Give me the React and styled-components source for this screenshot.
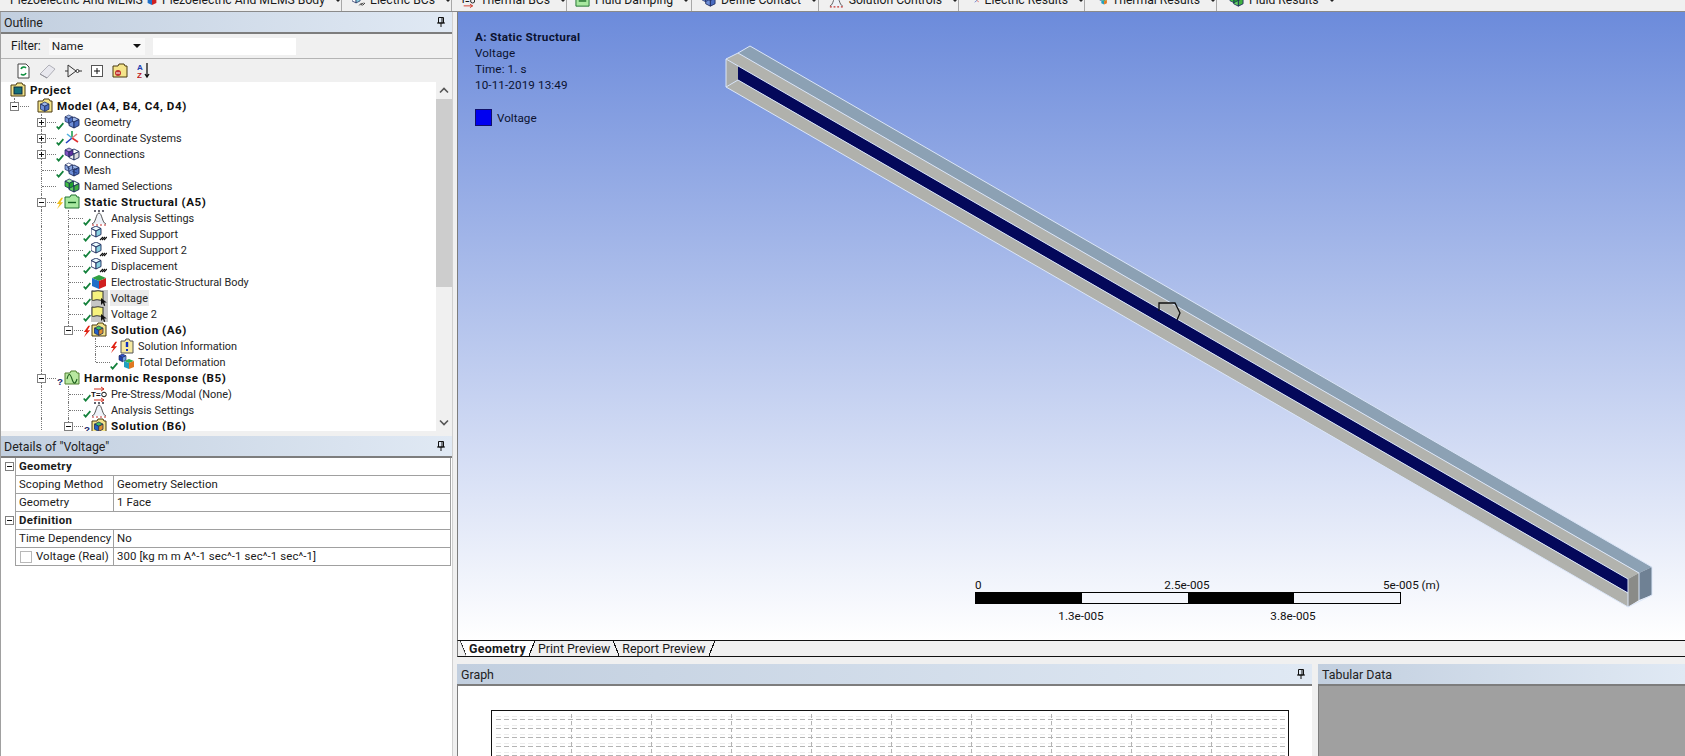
import React from "react";
import styled, { createGlobalStyle } from "styled-components";

const GlobalStyle = createGlobalStyle`
html, body { margin: 0; padding: 0; background: #f0f0f0; }
body { font-family: Roboto, "Noto Sans", sans-serif; font-size: 11.5px; color: #1a1a1a; }
* { box-sizing: border-box; }
`;

const Page = styled.div`
  width: 1685px;
  height: 756px;
  overflow: hidden;
  display: flex;
  flex-direction: column;
  background: #f0f0f0;
`;

/* top toolbar, cut off by the window */
const TopBar = styled.div`
  height: 12px;
  flex: none;
  display: flex;
  overflow: hidden;
  padding-left: 9px;
  background: #f0f0f0;
  border-bottom: 1px solid #8a8a8a;
`;
const TopItem = styled.div`
  flex: none;
  width: ${(p) => p.$w}px;
  height: 22px;
  margin-top: -11px;
  display: flex;
  align-items: center;
  gap: 5px;
  padding-left: ${(p) => p.$pad}px;
  font-size: 12.2px;
  white-space: nowrap;
  border-right: ${(p) => (p.$sep ? "1px solid #a8a8a8" : "none")};
`;
const TinyArrow = styled.span`
  width: 0;
  height: 0;
  margin-left: 5px;
  border-left: 3px solid transparent;
  border-right: 3px solid transparent;
  border-top: 3px solid #222;
`;

const Main = styled.div`
  flex: 1;
  display: flex;
  min-height: 0;
`;
const LeftColumn = styled.div`
  width: 453px;
  flex: none;
  display: flex;
  flex-direction: column;
  background: #fff;
  border-left: 1px solid #a0a0a0;
  border-right: 1px solid #d0d0d0;
`;
const RightColumn = styled.div`
  flex: 1;
  margin-left: 4px;
  display: flex;
  flex-direction: column;
  min-width: 0;
`;

const PanelHead = styled.div`
  height: 22px;
  flex: none;
  display: flex;
  align-items: center;
  justify-content: space-between;
  padding: 0 7px 0 ${(p) => p.$inset || 3}px;
  font-size: 12.4px;
  color: #222;
  background: linear-gradient(90deg, #c2cfdf, #e0e9f4);
  border-bottom: 2px solid #7d7d7d;
`;

const FilterRow = styled.div`
  height: 25px;
  flex: none;
  display: flex;
  align-items: center;
  padding-left: 10px;
  background: #f0f0f0;
  border-bottom: 1px solid #b4b4b4;
  font-size: 12px;
`;
const FilterCombo = styled.div`
  width: 96px;
  height: 17px;
  margin-left: 8px;
  padding-left: 3px;
  display: flex;
  align-items: center;
  justify-content: space-between;
  padding-right: 4px;
  background: #f8f8f8;
  font-size: 11.8px;
`;
const ComboArrow = styled.span`
  width: 0;
  height: 0;
  border-left: 4px solid transparent;
  border-right: 4px solid transparent;
  border-top: 4px solid #111;
`;
const FilterInput = styled.div`
  width: 143px;
  height: 17px;
  margin-left: 8px;
  background: #fff;
`;
const TreeTools = styled.div`
  height: 23px;
  flex: none;
  display: flex;
  align-items: center;
  gap: 9px;
  padding-left: 15px;
  background: #f0f0f0;
`;

const TreeWrap = styled.div`
  height: 349px;
  flex: none;
  display: flex;
`;
const Tree = styled.div`
  flex: 1;
  overflow: hidden;
  background: #fff;
`;
const Row = styled.div`
  height: 16px;
  display: flex;
  align-items: stretch;
  padding-left: ${(p) => (p.$root ? 9 : 0)}px;
  white-space: nowrap;
`;
const Indent = styled.div`
  width: 27px;
  flex: none;
  position: relative;
  &::before {
    content: "";
    display: ${(p) => (p.$on ? "block" : "none")};
    position: absolute;
    left: 13px;
    top: 0;
    bottom: 0;
    border-left: 1px dotted #777;
  }
`;
const Connector = styled(Indent)`
  &::before {
    display: block;
    bottom: ${(p) => (p.$last ? "8px" : "0")};
  }
  &::after {
    content: "";
    position: absolute;
    left: 14px;
    right: -1px;
    top: 8px;
    border-top: 1px dotted #777;
  }
`;
const Expander = styled.div`
  position: absolute;
  z-index: 1;
  left: 9px;
  top: 4px;
  width: 9px;
  height: 9px;
  border: 1px solid #808080;
  background: #fff;
  &::before {
    content: "";
    position: absolute;
    left: 1px;
    right: 1px;
    top: 3px;
    border-top: 1px solid #111;
  }
  &::after {
    content: "";
    display: ${(p) => (p.$open ? "none" : "block")};
    position: absolute;
    top: 1px;
    bottom: 1px;
    left: 3px;
    border-left: 1px solid #111;
  }
`;
const StatusSlot = styled.div`
  width: 8px;
  margin-left: 1px;
  flex: none;
  display: flex;
  align-items: flex-end;
  justify-content: center;
`;
const IconSlot = styled.div`
  width: 17px;
  margin-right: 2px;
  flex: none;
  display: flex;
  align-items: center;
  background: ${(p) => (p.$hl ? "#c6c6c6" : "transparent")};
`;
const Label = styled.div`
  font-size: ${(p) => (p.$bold ? 11.6 : 10.9)}px;
  line-height: ${(p) => (p.$bold ? 16 : 15)}px;
  padding: ${(p) => (p.$bold ? "0 1px" : "1px 1px 0")};
  font-weight: ${(p) => (p.$bold ? 700 : 400)};
  letter-spacing: ${(p) => (p.$bold ? "0.55px" : "0")};
  color: ${(p) => (p.$bold ? "#111" : "#262626")};
  background: ${(p) => (p.$sel ? "#ebebeb" : "transparent")};
`;

const ScrollBar = styled.div`
  width: 16px;
  flex: none;
  display: flex;
  flex-direction: column;
  align-items: center;
  background: #f0f0f0;
`;
const ScrollArrow = styled.div`
  height: 17px;
  flex: none;
  display: flex;
  align-items: center;
`;
const ScrollThumb = styled.div`
  width: 16px;
  height: 188px;
  flex: none;
  background: #cdcdcd;
`;
const ScrollRest = styled.div`
  flex: 1;
`;
const PanelGap = styled.div`
  height: 5px;
  flex: none;
  background: #f0f0f0;
`;

const Table = styled.div`
  margin-left: 1px;
  width: 449px;
  border-right: 1px solid #a0a0a0;
`;
const TableRow = styled.div`
  display: flex;
  height: 18px;
  font-size: 11.4px;
  line-height: 17px;
  letter-spacing: 0.1px;
`;
const Gutter = styled.div`
  width: 14px;
  flex: none;
  position: relative;
  border-right: 1px solid #a0a0a0;
`;
const GroupToggle = styled(Expander)`
  left: 3px;
  top: 4px;
`;
const NameCell = styled.div`
  width: 98px;
  flex: none;
  display: flex;
  align-items: center;
  padding-left: 3px;
  white-space: nowrap;
  border-right: 1px solid #a0a0a0;
  border-bottom: 1px solid #a0a0a0;
`;
const ValueCell = styled.div`
  flex: 1;
  padding-left: 3px;
  border-bottom: 1px solid #a0a0a0;
  white-space: nowrap;
`;
const GroupCell = styled(ValueCell)`
  font-weight: 700;
  letter-spacing: 0.35px;
`;
const CheckBox = styled.span`
  width: 12px;
  height: 12px;
  margin: 0 4px 0 1px;
  flex: none;
  background: #fff;
  border: 1px solid #b8b8b8;
`;

/* graphics window */
const Viewport = styled.div`
  flex: 1;
  position: relative;
  overflow: hidden;
  padding: 17px 0 0 17px;
  background: linear-gradient(180deg, #6c8bdb 0%, #ffffff 100%);
  border-left: 1px solid #7d7d7d;
  color: #0b1230;
`;
const BeamCanvas = styled.svg`
  position: absolute;
  left: 0;
  top: 0;
`;
const Note = styled.div`
  font-size: 11.7px;
  line-height: 16px;
  font-weight: ${(p) => (p.$bold ? 700 : 400)};
  letter-spacing: ${(p) => (p.$bold ? "0.3px" : "0.1px")};
  white-space: nowrap;
`;
const Legend = styled.div`
  display: flex;
  align-items: center;
  gap: 5px;
  margin-top: 16px;
  font-size: 11.7px;
`;
const Swatch = styled.span`
  width: 17px;
  height: 17px;
  background: #0000f0;
  border: 1px solid #10106a;
`;
const Scale = styled.div`
  position: absolute;
  left: 517px;
  top: 566px;
  width: 426px;
  color: #111;
`;
const ScaleTicks = styled.div`
  position: relative;
  height: 14px;
  font-size: 11.7px;
  line-height: 14px;
`;
const ScaleTick = styled.span`
  position: absolute;
  white-space: nowrap;
  left: ${(p) => p.$x}px;
  transform: translateX(${(p) => (p.$start ? "0" : "-50%")});
`;
const ScaleBar = styled.div`
  height: 12px;
  display: flex;
  margin-bottom: 5px;
  border: 1px solid #000;
`;
const ScaleSeg = styled.div`
  flex: 1;
  background: ${(p) => (p.$dark ? "#000" : "#f4f6fc")};
`;

const TabBar = styled.div`
  height: 17px;
  flex: none;
  display: flex;
  padding-left: 2px;
  background: #f0f0f0;
  border-top: 1px solid #111;
  border-bottom: 1px solid #111;
  border-left: 1px solid #7d7d7d;
  font-size: 12.4px;
`;
const Tab = styled.div`
  position: relative;
  margin-left: ${(p) => (p.$first ? 0 : -6)}px;
  padding: 0 9px;
  height: 15px;
  line-height: 15px;
  white-space: nowrap;
  font-weight: ${(p) => (p.$active ? 700 : 400)};
  ${(p) => p.$active && "letter-spacing: 0.3px; background: #fff; clip-path: polygon(0 0, 100% 0, calc(100% - 6px) 100%, 6px 100%);"}
  &::before, &::after {
    content: "";
    position: absolute;
    top: 0;
    bottom: 0;
    width: 6px;
  }
  &::before {
    left: 0;
    background: linear-gradient(
      ${(p) => (p.$up ? "to top left" : "to top right")},
      transparent 46%, #111 46%, #111 56%, transparent 56%
    );
  }
  &::after {
    right: 0;
    background: linear-gradient(
      ${(p) => (p.$up ? "to top right" : "to top left")},
      transparent 46%, #111 46%, #111 56%, transparent 56%
    );
  }
`;
const TabGap = styled.div`
  height: 7px;
  flex: none;
`;
const Bottom = styled.div`
  height: 92px;
  flex: none;
  display: flex;
  gap: 6px;
`;
const GraphPanel = styled.div`
  width: 855px;
  flex: none;
  display: flex;
  flex-direction: column;
`;
const GraphBody = styled.div`
  flex: 1;
  padding: 24px 24px 0 33px;
  background: #fff;
  border-left: 1px solid #7d7d7d;
  overflow: hidden;
`;
const ChartFrame = styled.svg`
  display: block;
  border: 1px solid #111;
  border-bottom: none;
`;
const TabularPanel = styled.div`
  flex: 1;
  display: flex;
  flex-direction: column;
`;
const TabularBody = styled.div`
  flex: 1;
  background: #a0a0a0;
  border-left: 1px solid #7d7d7d;
`;

/* ---------- icons ---------- */
const Pin = () => (
  <svg width="8" height="10" viewBox="0 0 8 10">
    <path d="M1.5 .5h5v5.5h-5zM0 6h8M4 6v4M5 1v5" fill="none" stroke="#111" strokeWidth="1" />
  </svg>
);
const Chevron = ({ down }) => (
  <svg width="10" height="7" viewBox="0 0 10 7">
    <path d={down ? "M1 1.5l4 4 4-4" : "M1 5.5l4-4 4 4"} fill="none" stroke="#555" strokeWidth="1.6" />
  </svg>
);
const Check = () => (
  <svg width="9" height="8" viewBox="0 0 9 8">
    <path d="M.8 4.5L3 7 8.3 .8" fill="none" stroke="#12803a" strokeWidth="1.9" />
  </svg>
);
const Bolt = ({ color }) => (
  <svg width="9" height="13" viewBox="0 0 9 13">
    <path d="M6 0L1 7h3l-3 6 7-8H5l3-5z" fill={color} />
  </svg>
);
const Question = () => (
  <svg width="9" height="11" viewBox="0 0 9 11">
    <text x="1" y="10" fontSize="11" fontWeight="700" fontFamily="Liberation Sans" fill="#1a2a6c">?</text>
  </svg>
);
const Status = ({ kind }) => {
  if (kind === "check") return <Check />;
  if (kind === "bolt") return <Bolt color="#f0c020" />;
  if (kind === "redbolt") return <Bolt color="#e02010" />;
  if (kind === "question") return <Question />;
  return null;
};

const Cube = ({ top = "#9db7e8", left = "#6f8fd8", right = "#4a6cc0", stroke = "#1c2a5c", x = 3, y = 2, s = 1 }) => (
  <g transform={`translate(${x} ${y}) scale(${s})`} stroke={stroke} strokeWidth="0.9" strokeLinejoin="round">
    <path d="M5 0l5 2.5-5 2.5-5-2.5z" fill={top} />
    <path d="M0 2.5l5 2.5v6l-5-2.5z" fill={left} />
    <path d="M10 2.5l-5 2.5v6l5-2.5z" fill={right} />
  </g>
);
const Folder = ({ fill = "#f4e48a", stroke = "#4a3a10", children }) => (
  <>
    <path d="M1 3h5l1-2h5l1 2h2v11H1z" fill={fill} stroke={stroke} strokeWidth="1" />
    {children}
  </>
);
const ICONS = {
  project: <Folder><rect x="4" y="5" width="8" height="7" fill="#15707a" stroke="#0c2a40" /></Folder>,
  model: <Folder><Cube x={3.5} y={4} s={0.85} /></Folder>,
  geometry: <><Cube x={5} y={3} /><Cube x={1} y={1} s={0.75} /></>,
  axes: (
    <g fill="none" strokeWidth="1.6">
      <path d="M8 8V1" stroke="#20a050" />
      <path d="M8 8L2 13" stroke="#2040c0" />
      <path d="M8 8l6 4" stroke="#e03030" />
      <path d="M8 8L3 4" stroke="#50b0e0" />
      <path d="M8 8l5-4" stroke="#e08080" />
    </g>
  ),
  connections: <><Cube top="#fff" left="#eee" right="#ddd" x={5} y={3} /><Cube top="#c0a0e0" left="#8050c0" right="#6030a0" x={1} y={2} s={0.8} /></>,
  mesh: (
    <>
      <Cube x={5} y={3} />
      <Cube x={1} y={1} s={0.75} top="#fff" left="#8aa6e0" right="#8aa6e0" />
      <path d="M3 5l3 2M8 5l5 3M8 9l5 2" stroke="#1c2a5c" strokeWidth=".6" />
    </>
  ),
  named: <><Cube top="#e0ffe0" left="#60d060" right="#40b040" x={5} y={3} /><Cube top="#a0e8a0" left="#40c040" right="#20a030" x={1} y={1} s={0.85} /></>,
  static: <Folder fill="#a8e8a0" stroke="#207030"><path d="M4 8.5h8" stroke="#106020" strokeWidth="1.4" /></Folder>,
  harmonic: <Folder fill="#b8e8a0" stroke="#508030"><path d="M3 9c1.500-6 3-6 5 0s3.500 5 5 0" fill="none" stroke="#206020" strokeWidth="1.1" /></Folder>,
  settings: (
    <>
      <path d="M1 14c4-1 4-11 7-11s3 10 7 11" fill="#eef2f8" stroke="#555" strokeWidth="1" />
      <path d="M4 0v2M8 0v2M12 0v2" stroke="#223" strokeWidth="1.4" />
      <path d="M1 15h14" stroke="#c03030" strokeWidth="1.2" strokeDasharray="2 2" />
    </>
  ),
  support: (
    <>
      <Cube top="#e8f8fc" left="#fff" right="#8ad0e0" x={0} y={0} />
      <path d="M9 14l3-3M11 14l3-3M13 14l3-3" stroke="#111" strokeWidth="1.1" />
    </>
  ),
  body: (
    <g>
      <path d="M1 4l7-3 7 3-7 3z" fill="#30a040" />
      <path d="M1 4l7 3v8l-7-3z" fill="#2070c8" />
      <path d="M15 4l-7 3v8l7-3z" fill="#d02020" />
    </g>
  ),
  voltage: (
    <>
      <path d="M1 1c3 1 5-1 8 0s3 0 3 0v9c-3 1-5-1-8 0s-3 0-3 0z" fill="#f6f27e" stroke="#333" strokeWidth="1" />
      <path d="M10 8v7l2-2 1 3 1.200-.6-1-3h2.600z" fill="#111" />
    </>
  ),
  solution: (
    <Folder>
      <Cube top="#40c060" left="#2060c8" right="#e09030" x={3.5} y={4} s={0.85} />
    </Folder>
  ),
  info: (
    <>
      <path d="M3 3h4l1-2h3l1 2h3v12H3z" fill="#f6e9a0" stroke="#555" strokeWidth="1" />
      <path d="M9 4v5" stroke="#1030c0" strokeWidth="2.4" />
      <path d="M9 11v2" stroke="#1030c0" strokeWidth="2" />
    </>
  ),
  deformation: (
    <>
      <path d="M6 7l5-2 5 2-5 2z" fill="#30b050" />
      <path d="M6 7l5 2v6l-5-2z" fill="#20a0c0" />
      <path d="M16 7l-5 2v6l5-2z" fill="#e07820" />
      <Cube top="#3050c8" left="#2040b0" right="#70a0e8" x={1} y={0} s={0.7} />
    </>
  ),
  prestress: (
    <>
      <path d="M3 3h10M10 1l3 2-3 2M3 14h10M10 12l3 2-3 2" fill="none" stroke="#d03020" strokeWidth="1" />
      <text x="0" y="11" fontSize="8" fontWeight="700" fontFamily="Liberation Sans" fill="#111">T=</text>
      <circle cx="13" cy="8.500" r="2.300" fill="none" stroke="#111" />
    </>
  ),
};
const TreeIcon = ({ name }) => (
  <svg width="16" height="16" viewBox="0 0 16 16">{ICONS[name]}</svg>
);

const Tool = ({ w = 16, children }) => (
  <svg width={w} height="16" viewBox={`0 0 ${w} 16`}>{children}</svg>
);

const TopIcon = ({ name }) => (
  <svg width="15" height="15" viewBox="0 0 16 16">{ICONS[name]}</svg>
);

/* ---------- data ---------- */
const TOP_ITEMS = [
  { label: "Piezoelectric And MEMS", w: 137, pad: 1 },
  { label: "Piezoelectric And MEMS Body", w: 196, pad: 1, icon: "body", sep: true, arrow: true },
  { label: "Electric BCs", w: 110, pad: 10, icon: "support", sep: true, arrow: true },
  { label: "Thermal BCs", w: 115, pad: 9, icon: "prestress", sep: true, arrow: true },
  { label: "Fluid Damping", w: 125, pad: 8, icon: "static", sep: true, arrow: true },
  { label: "Define Contact", w: 127, pad: 9, icon: "geometry", sep: true, arrow: true },
  { label: "Solution Controls", w: 140, pad: 10, icon: "settings", sep: true, arrow: true },
  { label: "Electric Results", w: 126, pad: 15, icon: "axes", sep: true, arrow: true },
  { label: "Thermal Results", w: 132, pad: 13, icon: "deformation", sep: true, arrow: true },
  { label: "Fluid Results", w: 120, pad: 12, icon: "named", arrow: true },
];

const TREE = [
  { d: 0, label: "Project", icon: "project", bold: true },
  { d: 1, label: "Model (A4, B4, C4, D4)", icon: "model", bold: true, open: true, last: true },
  { d: 2, label: "Geometry", icon: "geometry", status: "check", closed: true },
  { d: 2, label: "Coordinate Systems", icon: "axes", status: "check", closed: true },
  { d: 2, label: "Connections", icon: "connections", status: "check", closed: true },
  { d: 2, label: "Mesh", icon: "mesh", status: "check" },
  { d: 2, label: "Named Selections", icon: "named" },
  { d: 2, label: "Static Structural (A5)", icon: "static", status: "bolt", bold: true, open: true },
  { d: 3, label: "Analysis Settings", icon: "settings", status: "check", guides: [1] },
  { d: 3, label: "Fixed Support", icon: "support", status: "check", guides: [1] },
  { d: 3, label: "Fixed Support 2", icon: "support", status: "check", guides: [1] },
  { d: 3, label: "Displacement", icon: "support", status: "check", guides: [1] },
  { d: 3, label: "Electrostatic-Structural Body", icon: "body", status: "check", guides: [1] },
  { d: 3, label: "Voltage", icon: "voltage", status: "check", guides: [1], hl: true, sel: true },
  { d: 3, label: "Voltage 2", icon: "voltage", status: "check", guides: [1], hl: true },
  { d: 3, label: "Solution (A6)", icon: "solution", status: "redbolt", bold: true, open: true, guides: [1], last: true },
  { d: 4, label: "Solution Information", icon: "info", status: "redbolt", guides: [1] },
  { d: 4, label: "Total Deformation", icon: "deformation", status: "check", guides: [1], last: true },
  { d: 2, label: "Harmonic Response (B5)", icon: "harmonic", status: "question", bold: true, open: true },
  { d: 3, label: "Pre-Stress/Modal (None)", icon: "prestress", status: "check", guides: [1] },
  { d: 3, label: "Analysis Settings", icon: "settings", status: "check", guides: [1] },
  { d: 3, label: "Solution (B6)", icon: "solution", status: "question", bold: true, open: true, guides: [1] },
];

function TreeRow({ node }) {
  const guides = node.guides || [];
  const cols = [];
  for (let i = 0; i < node.d - 1; i++) cols.push(<Indent key={i} $on={guides.includes(i)} />);
  return (
    <Row $root={node.d === 0}>
      {cols}
      {node.d > 0 && (
        <Connector $last={node.last}>
          {(node.open || node.closed) && <Expander $open={node.open} />}
        </Connector>
      )}
      {node.d > 0 && <StatusSlot><Status kind={node.status} /></StatusSlot>}
      <IconSlot $hl={node.hl}><TreeIcon name={node.icon} /></IconSlot>
      <Label $bold={node.bold} $sel={node.sel}>{node.label}</Label>
    </Row>
  );
}

function BeamDrawing() {
  return (
    <BeamCanvas width="1228" height="630" viewBox="458 12 1228 630">
      <polygon points="750,46 1652,567 1639,573 738,53" fill="#8ca1b4" />
      <polygon points="738,53 1639,573 1628,579 726,59" fill="#b2b3ae" />
      <polygon points="726,59 738,66 738,80 726,87" fill="#aaaca8" />
      <polygon points="738,66 1628,579 1628,593 738,80" fill="#04085a" />
      <polygon points="738,80 1628,593 1628,607 726,87" fill="#b0b1ac" />
      <polygon points="1628,579 1639,573 1639,600 1628,607" fill="#8a8b88" />
      <polygon points="1639,573 1652,567 1652,595 1639,600" fill="#6f8194" />
      <g stroke="#dbe6f8" strokeWidth="1" fill="none">
        <path d="M726 59L738 53 750 46 1652 567 1652 595 1628 607 726 87z" />
        <path d="M738 53L1639 573V600M726 87L738 80 1628 593M726 59L1628 579V607" />
      </g>
      <path d="M1159 311V303H1175L1180 313 1177 320" fill="none" stroke="#111" strokeWidth="1.300" />
    </BeamCanvas>
  );
}

function GridChart() {
  const hs = [5, 8, 14, 17, 23, 26, 32, 35, 41, 44];
  const vs = [79, 159, 239, 319, 399, 479, 559, 639, 719];
  return (
    <ChartFrame width="798" height="60">
      {hs.map((y, i) => (
        <line
          key={y}
          x1="4"
          x2="794"
          y1={y + 0.5}
          y2={y + 0.5}
          stroke={i % 2 ? "#b4b4b4" : "#ececec"}
          strokeDasharray="5 3"
        />
      ))}
      {vs.map((x) => (
        <line key={x} x1={x + 0.5} x2={x + 0.5} y1="3" y2="60" stroke="#b4b4b4" strokeDasharray="4 3" />
      ))}
    </ChartFrame>
  );
}

export default function App() {
  return (
    <Page>
      <GlobalStyle />
      <TopBar>
        {TOP_ITEMS.map((it) => (
          <TopItem key={it.label} $w={it.w} $pad={it.pad} $sep={it.sep}>
            {it.icon && <TopIcon name={it.icon} />}
            <span>{it.label}</span>
            {it.arrow && <TinyArrow />}
          </TopItem>
        ))}
      </TopBar>
      <Main>
        <LeftColumn>
          <PanelHead>Outline <Pin /></PanelHead>
          <FilterRow>
            Filter:
            <FilterCombo>Name <ComboArrow /></FilterCombo>
            <FilterInput />
          </FilterRow>
          <TreeTools>
            <Tool w={14}>
              <path d="M2 1h8l3 3v11H2z" fill="#fff" stroke="#444" />
              <path d="M5 6a3 3 0 0 1 5-1M10 10a3 3 0 0 1-5 1" fill="none" stroke="#109040" strokeWidth="1.600" />
            </Tool>
            <Tool w={17}>
              <path d="M1 11L10 2l6 4-8 9z" fill="#e8e8ee" stroke="#b0b0b8" />
              <path d="M1 11l7 4" stroke="#909098" />
            </Tool>
            <Tool w={17}>
              <path d="M0 8h3M3 2v12l8-6zM14 8h3" fill="none" stroke="#333" />
              <circle cx="12.500" cy="8" r="1.500" fill="#fff" stroke="#333" />
            </Tool>
            <Tool w={12}>
              <rect x=".5" y="2.500" width="11" height="11" fill="#fff" stroke="#555" />
              <path d="M3 8h6M6 5v6" stroke="#111" />
            </Tool>
            <Tool w={16}>
              <Folder><circle cx="6" cy="10" r="3" fill="#c03030" /><path d="M4 10h4" stroke="#fff" /></Folder>
            </Tool>
            <Tool w={13}>
              <text x="0" y="7" fontSize="8" fontWeight="700" fontFamily="Liberation Sans" fill="#2040b0">A</text>
              <text x="0" y="15" fontSize="8" fontWeight="700" fontFamily="Liberation Sans" fill="#c02020">Z</text>
              <path d="M10 0v13M8 11l2 3 2-3" fill="none" stroke="#111" strokeWidth="1.300" />
            </Tool>
          </TreeTools>
          <TreeWrap>
            <Tree>
              {TREE.map((node, i) => <TreeRow key={i} node={node} />)}
            </Tree>
            <ScrollBar>
              <ScrollArrow><Chevron /></ScrollArrow>
              <ScrollThumb />
              <ScrollRest />
              <ScrollArrow><Chevron down /></ScrollArrow>
            </ScrollBar>
          </TreeWrap>
          <PanelGap />
          <PanelHead>Details of "Voltage" <Pin /></PanelHead>
          <Table>
            <TableRow>
              <Gutter><GroupToggle $open /></Gutter>
              <GroupCell>Geometry</GroupCell>
            </TableRow>
            <TableRow>
              <Gutter />
              <NameCell>Scoping Method</NameCell>
              <ValueCell>Geometry Selection</ValueCell>
            </TableRow>
            <TableRow>
              <Gutter />
              <NameCell>Geometry</NameCell>
              <ValueCell>1 Face</ValueCell>
            </TableRow>
            <TableRow>
              <Gutter><GroupToggle $open /></Gutter>
              <GroupCell>Definition</GroupCell>
            </TableRow>
            <TableRow>
              <Gutter />
              <NameCell>Time Dependency</NameCell>
              <ValueCell>No</ValueCell>
            </TableRow>
            <TableRow>
              <Gutter />
              <NameCell><CheckBox />Voltage (Real)</NameCell>
              <ValueCell>300 [kg m m A^-1 sec^-1 sec^-1 sec^-1]</ValueCell>
            </TableRow>
          </Table>
        </LeftColumn>
        <RightColumn>
          <Viewport>
            <BeamDrawing />
            <Note $bold>A: Static Structural</Note>
            <Note>Voltage</Note>
            <Note>Time: 1. s</Note>
            <Note>10-11-2019 13:49</Note>
            <Legend><Swatch />Voltage</Legend>
            <Scale>
              <ScaleTicks>
                <ScaleTick $x={0} $start>0</ScaleTick>
                <ScaleTick $x={212}>2.5e-005</ScaleTick>
                <ScaleTick $x={408} $start>5e-005 (m)</ScaleTick>
              </ScaleTicks>
              <ScaleBar>
                <ScaleSeg $dark />
                <ScaleSeg />
                <ScaleSeg $dark />
                <ScaleSeg />
              </ScaleBar>
              <ScaleTicks>
                <ScaleTick $x={106}>1.3e-005</ScaleTick>
                <ScaleTick $x={318}>3.8e-005</ScaleTick>
              </ScaleTicks>
            </Scale>
          </Viewport>
          <TabBar>
            <Tab $first $active>Geometry</Tab>
            <Tab $up>Print Preview</Tab>
            <Tab>Report Preview</Tab>
          </TabBar>
          <TabGap />
          <Bottom>
            <GraphPanel>
              <PanelHead $inset={4}>Graph <Pin /></PanelHead>
              <GraphBody><GridChart /></GraphBody>
            </GraphPanel>
            <TabularPanel>
              <PanelHead $inset={4}>Tabular Data</PanelHead>
              <TabularBody />
            </TabularPanel>
          </Bottom>
        </RightColumn>
      </Main>
    </Page>
  );
}
